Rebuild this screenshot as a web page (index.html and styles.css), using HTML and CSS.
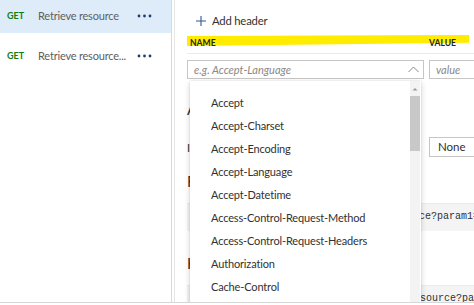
FILE: index.html
```html
<!DOCTYPE html>
<html>
<head>
<meta charset="utf-8">
<link rel="stylesheet" href="styles.css">
</head>
<body>
<div class="app">
  <aside class="sidebar">
    <div class="op op-active">
      <span class="verb">GET</span>
      <span class="op-name">Retrieve resource</span>
      <svg class="dots" width="15" height="4" viewBox="0 0 15 4"><circle cx="2" cy="2" r="1.4" fill="#1f3d73"/><circle cx="7.5" cy="2" r="1.4" fill="#1f3d73"/><circle cx="13" cy="2" r="1.4" fill="#1f3d73"/></svg>
    </div>
    <div class="op">
      <span class="verb">GET</span>
      <span class="op-name">Retrieve resource...</span>
      <svg class="dots" width="15" height="4" viewBox="0 0 15 4"><circle cx="2" cy="2" r="1.4" fill="#1f3d73"/><circle cx="7.5" cy="2" r="1.4" fill="#1f3d73"/><circle cx="13" cy="2" r="1.4" fill="#1f3d73"/></svg>
    </div>
  </aside>
  <main class="main">
    <div class="add-header">
      <svg class="plus" width="10" height="10" viewBox="0 0 10 10"><path d="M5 0V10M0 5H10" stroke="#2b5797" stroke-width="1.1" fill="none"/></svg>
      <span>Add header</span>
    </div>
    <div class="cols">
      <div class="col-label">NAME</div>
      <div class="col-label">VALUE</div>
    </div>
    <div class="inputs">
      <div class="name-input">
        <span class="placeholder">e.g. Accept-Language</span>
        <svg class="chev" width="11" height="7" viewBox="0 0 11 7"><path d="M0.5 6L5.5 1L10.5 6" stroke="#8a8886" stroke-width="1" fill="none"/></svg>
      </div>
      <div class="value-input"><span class="placeholder">value</span></div>
    </div>
    <div class="under">
      <h2 class="sec">Authorization</h2>
      <div class="field-row">
        <span class="field-label">Identity</span>
        <div class="select">None</div>
      </div>
      <h2 class="sec">Request URL</h2>
      <div class="code">https://contoso.azure-api.net/resource?param1=value</div>
      <h2 class="sec sec-http">HTTP request</h2>
      <div class="code code-http">GET https://contoso.azure-api.net/resource?param1=value HTTP/1.1</div>
    </div>
    <div class="dropdown">
      <ul class="options">
        <li>Accept</li>
        <li>Accept-Charset</li>
        <li>Accept-Encoding</li>
        <li>Accept-Language</li>
        <li>Accept-Datetime</li>
        <li>Access-Control-Request-Method</li>
        <li>Access-Control-Request-Headers</li>
        <li>Authorization</li>
        <li>Cache-Control</li>
        <li>Connection</li>
      </ul>
      <div class="scrollbar">
        <svg class="sb-arrow" width="10" height="8" viewBox="0 0 10 8"><path d="M2.5 5.5L5 3L7.5 5.5Z" fill="#9a9a9a"/></svg>
        <div class="sb-thumb"></div>
      </div>
    </div>
  </main>
</div>
</body>
</html>
```
FILE: styles.css
```css
* { box-sizing: border-box; }
html, body { margin: 0; padding: 0; background: #fff; }
body {
  width: 474px;
  height: 305px;
  overflow: hidden;
  font-family: Lato, "Noto Sans", sans-serif;
  color: #323130;
}
.app {
  display: flex;
  height: 303px;
  overflow: hidden;
  border-bottom: 1px solid #d6d6d6;
}
.sidebar {
  width: 172px;
  flex: none;
  border-right: 1px solid #dadada;
  display: flex;
  flex-direction: column;
  gap: 4px;
  margin-top: -3px;
}
.op {
  height: 36px;
  display: flex;
  align-items: center;
  padding-left: 7px;
}
.op-active { background: #deecf9; }
.verb {
  width: 31px;
  font-size: 9px;
  font-weight: 700;
  color: #107c10;
}
.op-name {
  width: 99px;
  font-size: 11px;
  letter-spacing: -0.2px;
  color: #605e5c;
  white-space: nowrap;
}
.dots { flex: none; margin-top: 1px; }
.main {
  flex: 1;
  position: relative;
  margin-left: 2px;
  border-left: 1px solid #e6e6e6;
  padding-left: 12px;
}
.add-header {
  display: flex;
  align-items: center;
  gap: 6px;
  padding: 12px 0 0 9px;
  height: 29px;
  font-size: 11.3px;
  letter-spacing: -0.2px;
  color: #323130;
}
.plus { flex: none; }
.cols {
  position: relative;
  isolation: isolate;
  display: grid;
  grid-template-columns: 237px 60px;
  column-gap: 5px;
  margin-top: 6px;
  height: 11px;
}
.cols::before {
  content: "";
  position: absolute;
  left: 0;
  top: 0;
  width: 282px;
  height: 11px;
  background: #ffec00;
  clip-path: polygon(0 1px, 100% 0, 100% 70%, 0 100%);
  z-index: -1;
}
.col-label {
  font-size: 8.6px;
  font-weight: 700;
  line-height: 11px;
  padding-top: 3px;
  padding-left: 3px;
  color: #252423;
  white-space: nowrap;
}
.col-label + .col-label { padding-left: 0; }
.inputs {
  display: grid;
  grid-template-columns: 237px 1fr;
  column-gap: 5px;
  margin-top: 7px;
  border-top: 1px solid #edebe9;
  padding-top: 6px;
}
.name-input, .value-input {
  height: 19px;
  border: 1px solid #c8c6c4;
  display: flex;
  align-items: center;
  padding-left: 6px;
}
.value-input { border-right: none; }
.name-input { justify-content: space-between; padding-right: 4px; }
.placeholder {
  font-size: 11px;
  font-style: italic;
  color: #8a8886;
}
.under {
  padding-top: 20px;
}
.sec {
  margin: 0;
  font-size: 15px;
  font-weight: 400;
  line-height: 20px;
  color: #323130;
}
.field-row {
  display: grid;
  grid-template-columns: 237px 1fr;
  column-gap: 5px;
  align-items: center;
  margin: 18px 0 14px;
}
.field-label { font-size: 11px; }
.select {
  height: 20px;
  border: 1px solid #c8c6c4;
  border-right: none;
  font-size: 11.5px;
  line-height: 18px;
  padding-left: 8px;
  color: #323130;
}
.code {
  margin-top: 12px;
  background: #f4f4f4;
  border-top: 1px solid #ebebeb;
  padding: 6px 0 8px 16px;
  font-family: "Liberation Mono", monospace;
  font-size: 10px;
  line-height: 13px;
  height: 28px;
  white-space: nowrap;
  color: #323130;
}
.code-http { padding-left: 17px; }
.sec-http { margin-top: 22px; }
.dropdown {
  position: absolute;
  left: 15px;
  top: 81px;
  width: 231px;
  height: 240px;
  background: #fff;
  box-shadow: 0 2px 6px rgba(0,0,0,0.18), 0 0 2px rgba(0,0,0,0.1);
  display: flex;
}
.options {
  list-style: none;
  margin: 0;
  padding: 10px 0 0 21px;
  flex: 1;
}
.options li {
  height: 23px;
  line-height: 23px;
  font-size: 11px;
  letter-spacing: -0.15px;
  color: #323130;
  white-space: nowrap;
}
.scrollbar {
  width: 10px;
  flex: none;
  background: #f3f3f3;
  margin-right: 1px;
  padding-top: 4px;
  display: flex;
  flex-direction: column;
  align-items: center;
}
.sb-thumb {
  margin-top: 3px;
  width: 10px;
  height: 55px;
  background: #c8c8c8;
}
```
